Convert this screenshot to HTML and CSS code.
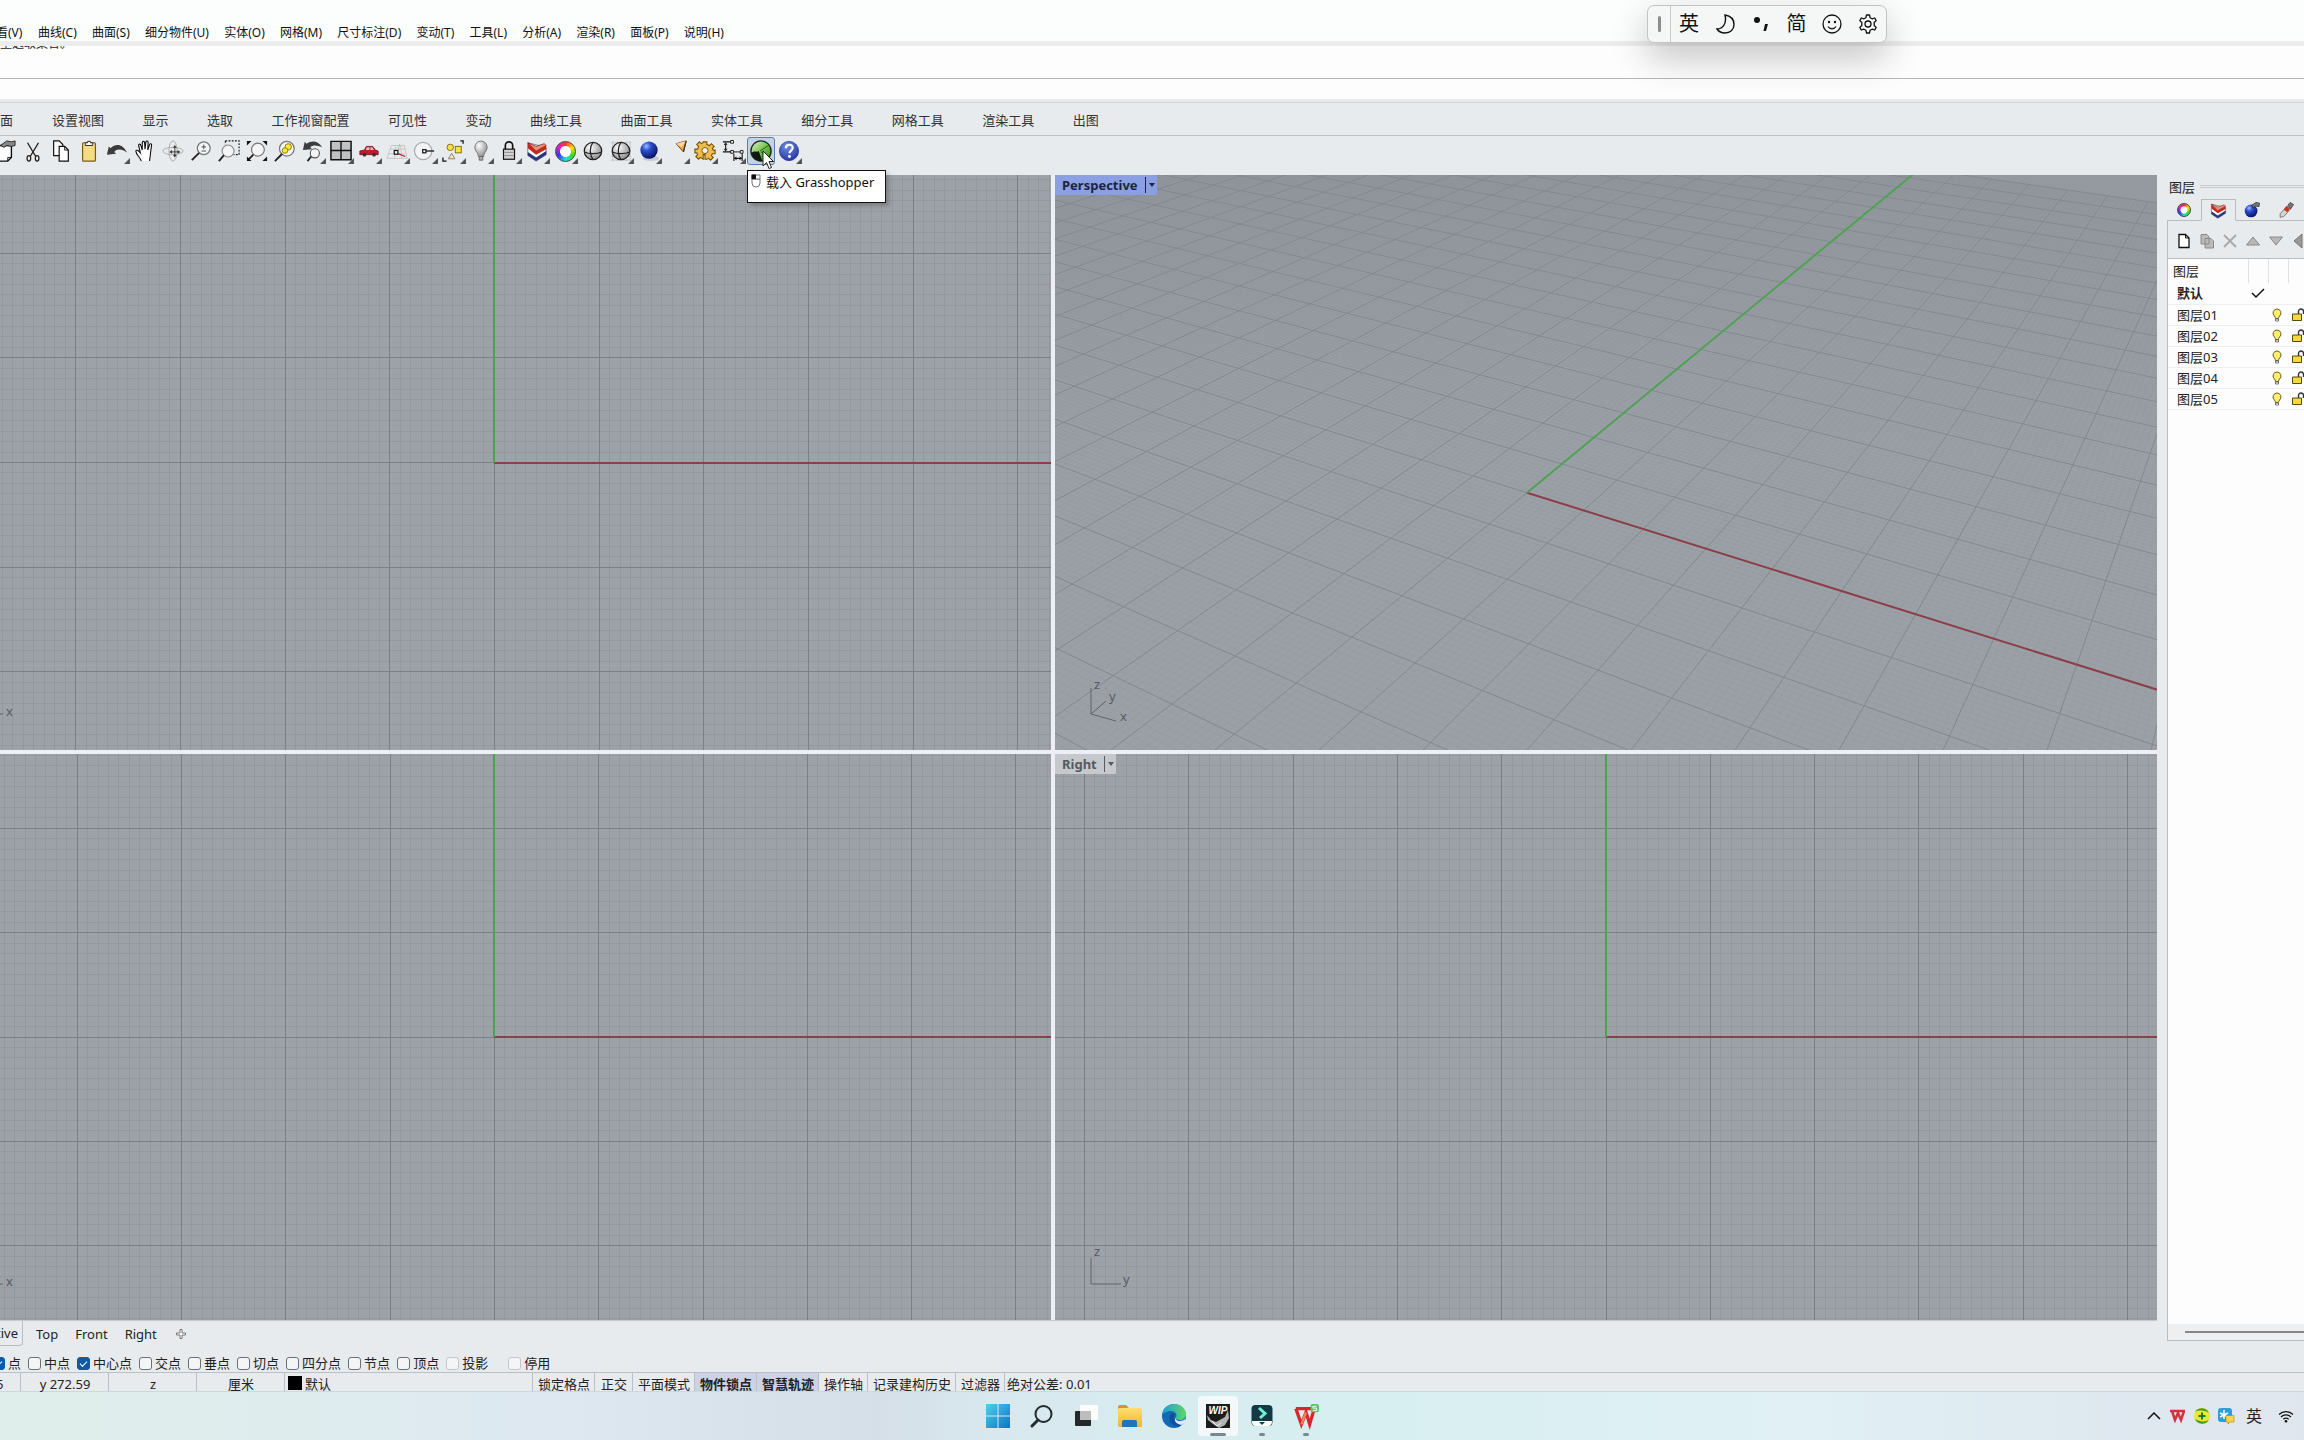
FILE: index.html
```html
<!DOCTYPE html>
<html lang="zh-CN">
<head>
  <meta charset="UTF-8" />
  <meta name="viewport" content="width=device-width, initial-scale=1" />
  <title>Rhino WIP</title>
  <link rel="stylesheet" href="styles.css">
</head>
<body>

  <svg class="defs" aria-hidden="true">
    <defs>
      <radialGradient id="gGrey" cx="35%" cy="30%" r="75%"><stop offset="0" stop-color="#fff"/><stop offset="1" stop-color="#8a8a8a"/></radialGradient>
      <radialGradient id="gBlue" cx="35%" cy="28%" r="75%"><stop offset="0" stop-color="#9db8ff"/><stop offset=".35" stop-color="#2b4fd0"/><stop offset="1" stop-color="#08105e"/></radialGradient>
      <radialGradient id="gHelp" cx="40%" cy="25%" r="80%"><stop offset="0" stop-color="#6f8be8"/><stop offset="1" stop-color="#2336a0"/></radialGradient>
      <linearGradient id="gGreen" x1="0" y1="0" x2="1" y2="1"><stop offset="0" stop-color="#e6f4da"/><stop offset=".5" stop-color="#74c44a"/><stop offset="1" stop-color="#2a8022"/></linearGradient>
      <linearGradient id="gWin" x1="0" y1="0" x2="1" y2="1"><stop offset="0" stop-color="#4fd0ee"/><stop offset="1" stop-color="#0a72c4"/></linearGradient>
      <linearGradient id="gFolder" x1="0" y1="0" x2="0" y2="1"><stop offset="0" stop-color="#ffdf70"/><stop offset="1" stop-color="#efb52f"/></linearGradient>
      <linearGradient id="gEdge" x1="0" y1="0" x2="1" y2="0"><stop offset="0" stop-color="#1b9de0"/><stop offset="1" stop-color="#5fd860"/></linearGradient>
      <symbol id="layers" viewBox="0 0 24 24">
        <path d="M2 3v14l9 6 11-7V8z" fill="#fff" stroke="#555" stroke-width=".8"/>
        <path d="M2 13l9 6 11-7v4l-11 7-9-6z" fill="#27357c"/>
        <path d="M2 3l9 9 11-6v4l-11 6-9-7z" fill="#c8281c"/>
        <path d="M2 3l9 9 11-6-2-2-9 3z" fill="#f0907a" stroke="#7a1c14" stroke-width=".8"/>
      </symbol>
      <symbol id="bulb" viewBox="0 0 12 14">
        <path d="M6 1a4 4 0 0 0-2.600 7c.8.8 1 1.400 1 2.500h3.200c0-1.100.2-1.700 1-2.500A4 4 0 0 0 6 1z" fill="#ffee6a" stroke="#6a6020"/>
        <path d="M4.500 11h3v2h-3z" fill="#fff" stroke="#555" stroke-width=".8"/>
      </symbol>
      <symbol id="unlock" viewBox="0 0 14 14">
        <path d="M7.500 6V3.500a2.500 2.500 0 0 1 5 0V6" fill="none" stroke="#333" stroke-width="1.400"/>
        <path d="M1.500 6h9v6.500h-9z" fill="#f5d93a" stroke="#554a10"/>
      </symbol>
    </defs>
  </svg>

  <nav class="menubar">
    <button class="menu menu-first">看(V)</button>
    <div class="menus">
      <button class="menu">曲线(C)</button>
      <button class="menu">曲面(S)</button>
      <button class="menu">细分物件(U)</button>
      <button class="menu">实体(O)</button>
      <button class="menu">网格(M)</button>
      <button class="menu">尺寸标注(D)</button>
      <button class="menu">变动(T)</button>
      <button class="menu">工具(L)</button>
      <button class="menu">分析(A)</button>
      <button class="menu">渲染(R)</button>
      <button class="menu">面板(P)</button>
      <button class="menu">说明(H)</button>
    </div>
  </nav>

  <section class="command">
    <div class="history"><p>至选取集合。</p></div>
    <input class="prompt" type="text" aria-label="指令">
  </section>

  <nav class="tooltabs">
    <button class="tooltab tooltab-first">面</button>
    <div class="tooltab-list">
      <button class="tooltab">设置视图</button>
      <button class="tooltab">显示</button>
      <button class="tooltab">选取</button>
      <button class="tooltab">工作视窗配置</button>
      <button class="tooltab">可见性</button>
      <button class="tooltab">变动</button>
      <button class="tooltab">曲线工具</button>
      <button class="tooltab">曲面工具</button>
      <button class="tooltab">实体工具</button>
      <button class="tooltab">细分工具</button>
      <button class="tooltab">网格工具</button>
      <button class="tooltab">渲染工具</button>
      <button class="tooltab">出图</button>
    </div>
  </nav>

  <div class="toolbar">
    <button class="tool" aria-label="文件属性"><svg viewBox="0 0 24 24"><path d="M2 6h17v13l-4 4H2z" fill="#fff" stroke="#111" stroke-width="1.500"/><path d="M15 23v-4h4" fill="none" stroke="#111"/><path d="M7 6l7-5 5 1 4-1v5l-4 1-5-1-3 2z" fill="#888" stroke="#222"/></svg></button>
    <button class="tool" aria-label="剪切"><svg viewBox="0 0 24 24"><path d="M6 3l9 15M18 3L9 18" stroke="#222" stroke-width="1.500" fill="none"/><ellipse cx="7.500" cy="20" rx="2" ry="3" fill="none" stroke="#222" stroke-width="1.400"/><ellipse cx="16.500" cy="20" rx="2" ry="3" fill="none" stroke="#222" stroke-width="1.400"/></svg></button>
    <button class="tool" aria-label="复制"><svg viewBox="0 0 24 24"><path d="M4 1h6l4 4v12H4z" fill="#fff" stroke="#111" stroke-width="1.300"/><path d="M10 7h6l4 4v12H10z" fill="#fff" stroke="#111" stroke-width="1.300"/><path d="M16 7v4h4" fill="none" stroke="#111"/></svg></button>
    <button class="tool" aria-label="粘贴"><svg viewBox="0 0 24 24"><rect x="5" y="3" width="14" height="20" rx="1" fill="#f4dc82" stroke="#7a5c14" stroke-width="1.300"/><path d="M8 3h2.500V1.500h3V3H16v3H8z" fill="#fff" stroke="#222"/></svg></button>
    <button class="tool more" aria-label="撤销"><svg viewBox="0 0 24 24"><path d="M1 16l2-9 2 2c6-6 14-4 18 5-5-4-11-5-14-1l2 2z" fill="#3c3c3c"/></svg></button>
    <button class="tool" aria-label="平移"><svg viewBox="0 0 24 24"><path d="M8 23c-1-4-6-7-6-11 1-2 3 0 5 2L5 6c0-2 2-2 2.500 0L9 11V3c0-2 2.600-2 2.600 0L12 10l1-8c.4-1.500 2.400-1 2.400.5L15 11l2-6c.6-1.600 2.500-1 2.200.8L18 14c0 4-1 6-1 9" fill="#fff" stroke="#111" stroke-width="1.200"/></svg></button>
    <button class="tool" aria-label="旋转视图"><svg viewBox="0 0 24 24"><ellipse cx="12" cy="12" rx="11" ry="4" fill="none" stroke="#aaa"/><ellipse cx="12" cy="12" rx="4.500" ry="11" fill="none" stroke="#aaa"/><path d="M14 8v9M10 13h9" stroke="#333"/><path d="M14 5.500l-2 3h4zM14 19l-2-3h4zM8 13l3-2v4zM20 13l-3-2v4z" fill="#333"/></svg></button>
    <button class="tool" aria-label="缩放"><svg viewBox="0 0 24 24"><circle cx="15" cy="9" r="7" fill="#f3f5f6" stroke="#777" stroke-width="1.300"/><path d="M12.500 7.500h5M15 5v5M12.500 12h5" stroke="#444"/><path d="M10 14l-8 8" stroke="#222" stroke-width="2"/></svg></button>
    <button class="tool" aria-label="框选缩放"><svg viewBox="0 0 24 24"><path d="M8 1h15v15h-6M8 1v4" fill="none" stroke="#111" stroke-dasharray="2 1.500" stroke-width="1.200"/><circle cx="11" cy="12" r="6.500" fill="#f3f5f6" stroke="#888" stroke-width="1.200"/><path d="M6.500 16.500L1 23" stroke="#222" stroke-width="2"/></svg></button>
    <button class="tool" aria-label="缩放至最大范围"><svg viewBox="0 0 24 24"><circle cx="13" cy="10.500" r="7" fill="#f3f5f6" stroke="#777" stroke-width="1.300"/><path d="M8 16l-6 6" stroke="#222" stroke-width="2"/><path d="M1 1h5L1 6zM23 1v5l-5-5zM23 23h-5l5-5zM1 23v-5l5 5z" fill="#111"/></svg></button>
    <button class="tool" aria-label="缩放至选取物件"><svg viewBox="0 0 24 24"><circle cx="14" cy="9.500" r="8" fill="#f3f5f6" stroke="#777" stroke-width="1.300"/><circle cx="15.500" cy="7.500" r="3.500" fill="#ffe93c" stroke="#847400"/><circle cx="12" cy="11.500" r="3" fill="#ffe93c" stroke="#847400"/><path d="M9 15l-8 8" stroke="#222" stroke-width="2"/></svg></button>
    <button class="tool more" aria-label="还原视图"><svg viewBox="0 0 24 24"><path d="M1 11l2-9 2 2c6-4 13-3 17 4-5-2-10-3-13 0l2 2z" fill="#3c3c3c"/><circle cx="14" cy="14.500" r="5" fill="#f3f5f6" stroke="#555" stroke-width="1.200"/><path d="M10 18l-4 5" stroke="#222" stroke-width="2"/></svg></button>
    <button class="tool more" aria-label="四个工作视窗"><svg viewBox="0 0 24 24"><path d="M1 1.500h22v20H1z" fill="#bfc1c2" stroke="#111" stroke-width="1.600"/><path d="M12 1.500v20M1 11.500h22" stroke="#111" stroke-width="1.500"/></svg></button>
    <button class="tool more" aria-label="设置视图"><svg viewBox="0 0 24 24"><path d="M2 12l5-1 2-4h7l3 4 3 1v4H2z" fill="#c4182c" stroke="#5a0c14" stroke-width=".8"/><path d="M9.500 8h3v3h-4zM13.500 8h2l2 3h-4z" fill="#e8b8bc"/><circle cx="7" cy="16" r="2" fill="#333"/><circle cx="17.500" cy="16" r="2" fill="#333"/></svg></button>
    <button class="tool more" aria-label="设置工作平面"><svg viewBox="0 0 24 24"><path d="M6 6h14l3 14H1zM4 10h17M3 15h19M11 6l-2 14M16 6l1 14" fill="none" stroke="#c4c4c4"/><path d="M11 14l10 4" stroke="#c41c2c" stroke-width="1.400"/><path d="M13 12l2-8" stroke="#9bc79b"/><rect x="9" y="11.500" width="4" height="4" fill="#fff" stroke="#111" stroke-width="1.300"/></svg></button>
    <button class="tool more" aria-label="物件锁点"><svg viewBox="0 0 24 24"><circle cx="10" cy="12" r="9.500" fill="#f1f3f4" stroke="#aaa" stroke-width="1.300"/><path d="M13 12h9" stroke="#111" stroke-width="1.400"/><rect x="9.500" y="10.500" width="3.500" height="3.500" fill="#fff" stroke="#111" stroke-width="1.300"/></svg></button>
    <button class="tool more" aria-label="选取"><svg viewBox="0 0 24 24"><circle cx="9" cy="8" r="3.500" fill="#ffe23c" stroke="#7a6a10"/><rect x="14.500" y="7" width="6.500" height="7" fill="#ffe23c" stroke="#7a6a10"/><path d="M10.500 14.500l3.500 6H7z" fill="#f2e6d0" stroke="#8a7a5a"/><path d="M20 1h3v3M1 19v4h4" fill="none" stroke="#111" stroke-width="1.400"/></svg></button>
    <button class="tool more" aria-label="隐藏物件"><svg viewBox="0 0 24 24"><path d="M12 1a7 7 0 0 0-5.500 11c2 3 2.500 4 2.500 6h6c0-2 .5-3 2.500-6A7 7 0 0 0 12 1z" fill="url(#gGrey)" stroke="#777"/><path d="M10 18h4v4h-4z" fill="#aaa" stroke="#666"/></svg></button>
    <button class="tool more" aria-label="锁定物件"><svg viewBox="0 0 24 24"><path d="M8 10V6a4 4 0 0 1 8 0v4" fill="none" stroke="#111" stroke-width="1.800"/><rect x="6" y="10" width="12" height="11" fill="#d4d4d4" stroke="#111" stroke-width="1.300"/><path d="M7 13.500h10M7 17h10" stroke="#888"/></svg></button>
    <button class="tool more" aria-label="图层"><svg viewBox="0 0 24 24"><use href="#layers"/></svg></button>
    <button class="tool more" aria-label="物件属性"><span class="wheel"></span></button>
    <button class="tool" aria-label="着色"><svg viewBox="0 0 24 24"><circle cx="12" cy="12" r="9.500" fill="url(#gGrey)" stroke="#222" stroke-width="1.400"/><path d="M12 2.500c-4 5-4 13 0 19M2.500 13c5 2.500 14 2.500 19 0" fill="none" stroke="#222" stroke-width="1.300"/></svg></button>
    <button class="tool more" aria-label="着色模式"><svg viewBox="0 0 24 24"><path d="M3 1v22M8 1v22M13 1v22M18 1v22M22 1v22M1 3h22M1 8h22M1 13h22M1 18h22M1 22h22" stroke="#bbb" stroke-width=".8"/><circle cx="12" cy="12" r="9.500" fill="url(#gGrey)" stroke="#222" stroke-width="1.400"/><path d="M12 2.500c-4 5-4 13 0 19M2.500 13c5 2.500 14 2.500 19 0" fill="none" stroke="#222" stroke-width="1.300"/></svg></button>
    <button class="tool more" aria-label="渲染"><svg viewBox="0 0 24 24"><ellipse cx="14" cy="20" rx="9" ry="3" fill="#c6c9ce"/><circle cx="12" cy="11" r="9.500" fill="url(#gBlue)"/></svg></button>
    <button class="tool more" aria-label="聚光灯"><svg viewBox="0 0 24 24"><path d="M11 4l11-3-3 12z" fill="#f4a63a" stroke="#7a3c10"/><path d="M11 4l6 4 5-7z" fill="#ffd99a"/><path d="M22 1l-3 12" stroke="#3a3a3a" stroke-width="1.400"/></svg></button>
    <button class="tool more" aria-label="选项"><svg viewBox="0 0 24 24"><path d="M10 2h4v3l3 1 2-2 3 3-2 2 1 2h2v4h-3l-1 2 2 2-3 3-2-2-2 1h-2v-5h-2v5l-3-2-2 2-3-3 2-2-1-2H1v-4h3l1-3-2-2 3-3 2 2 2-1z" fill="#f0bc48" stroke="#7a5208" stroke-width="1.200"/><circle cx="12" cy="11.500" r="3.300" fill="#eef0f2" stroke="#7a5208"/></svg></button>
    <button class="tool more" aria-label="尺寸标注"><svg viewBox="0 0 24 24"><path d="M1 2h9M1 13h9M4 4v7M13 15v8M22 15v8M14 20h7" stroke="#111" stroke-width="1.200" fill="none"/><path d="M2.500 5.500L4 3l1.500 2.500M2.500 9.500L4 12l1.500-2.500M16 18.500L13.500 20l2.500 1.500M19 18.500l2.500 1.500-2.500 1.500" fill="none" stroke="#111"/><path d="M9.500.5h3v3h-3zM9.500 11.500h3v3h-3zM20 11.500h3v3h-3z" fill="#fff" stroke="#111"/><path d="M12 13h8" stroke="#111"/></svg></button>
    <div class="tool-wrap">
      <button class="tool hot" aria-label="载入 Grasshopper" aria-describedby="tip"><svg viewBox="0 0 24 24"><circle cx="12" cy="12" r="11" fill="url(#gGreen)" stroke="#1c2a18" stroke-width="1.500"/><path d="M1.500 14c4-3 6 0 8-2l4 11c-6 1-11-3-12-9z" fill="#10180e"/><path d="M11 12l9-6M12 13l7 4" stroke="#1c5a18"/></svg></button>
      <svg class="cursor" viewBox="0 0 12 20"><path d="M1 1v15l3.500-3.500L7 18.500l2.500-1-2.500-6h4.500z" fill="#fff" stroke="#222"/></svg>
      <div class="tip" id="tip" role="tooltip"><svg viewBox="0 0 10 14"><path d="M1 5h8v4a4 4 0 0 1-8 0z" fill="#fff" stroke="#777"/><path d="M1 1h8v4H1z" fill="#fff" stroke="#777"/><path d="M.5.500H5V5H.5z" fill="#111"/></svg>载入 Grasshopper</div>
    </div>
    <button class="tool more" aria-label="说明"><svg viewBox="0 0 24 24"><circle cx="12" cy="12" r="10.500" fill="url(#gHelp)" stroke="#26348a" stroke-width=".8"/><path d="M8.500 9c0-5 7.500-5 7.500-.5 0 3-3.500 3-3.500 6" fill="none" stroke="#fff" stroke-width="2.400"/><circle cx="12.500" cy="18" r="1.600" fill="#fff"/></svg></button>
  </div>

  <main class="workspace">
    <div class="stage">
      <div class="views">
        <section class="viewport" data-kind="plan" data-origin="right" data-step="104.7">
          <svg class="gizmo gizmo-cut" viewBox="0 0 20 60"><path d="M0 24h3"/><text x="6" y="26">x</text></svg>
        </section>
        <section class="viewport persp" data-kind="persp">
          <div class="view-title view-title-active"><button class="view-name">Perspective</button><button class="view-drop" aria-label="Perspective 菜单"></button></div>
          <svg class="gizmo" viewBox="0 0 60 60"><path d="M11 24V-2M11 24l15-13M11 24l25 7"/><text x="14" y="-1">z</text><text x="29" y="11">y</text><text x="40" y="31">x</text></svg>
        </section>
        <section class="viewport" data-kind="plan" data-origin="right" data-step="104.3">
          <svg class="gizmo gizmo-cut" viewBox="0 0 20 60"><path d="M0 24h3"/><text x="6" y="26">x</text></svg>
        </section>
        <section class="viewport" data-kind="plan" data-origin="center" data-step="104.3">
          <div class="view-title"><button class="view-name">Right</button><button class="view-drop" aria-label="Right 菜单"></button></div>
          <svg class="gizmo" viewBox="0 0 60 60"><path d="M11-2v26h30"/><text x="14" y="-4">z</text><text x="43" y="24">y</text></svg>
        </section>
      </div>
      <nav class="viewtabs">
        <button class="viewtab viewtab-on">tive</button>
        <button class="viewtab">Top</button>
        <button class="viewtab">Front</button>
        <button class="viewtab">Right</button>
        <button class="viewtab viewtab-add" aria-label="新增"><svg viewBox="0 0 10 10"><path d="M4 .5h2V4h3.500v2H6v3.500H4V6H.5V4H4z" fill="#fff" stroke="#777"/></svg></button>
      </nav>
    </div>

    <aside class="panel">
      <div class="panel-title"><h2>图层</h2><span class="grip"></span></div>
      <div class="panel-tabs">
        <button class="ptab" aria-label="属性"><span class="wheel wheel-sm"></span></button>
        <button class="ptab ptab-on" aria-label="图层"><svg viewBox="0 0 24 24"><use href="#layers"/></svg></button>
        <button class="ptab" aria-label="材质"><svg viewBox="0 0 24 24"><circle cx="10" cy="14" r="9" fill="url(#gBlue)"/><path d="M11 6l6-4 5 1-1 5-5-1-3 3z" fill="#777" stroke="#222"/></svg></button>
        <button class="ptab" aria-label="显示"><svg viewBox="0 0 24 24"><path d="M3 18l10-11 5 4L8 22l-5 1z" fill="#d8d4d0" stroke="#555"/><path d="M8 12l4-5 5 4-4 5z" fill="#c83420"/><path d="M14 6l3-4 5 3-4 6z" fill="#777" stroke="#333"/></svg></button>
      </div>
      <div class="panel-body">
        <div class="panel-tools">
          <button class="ptool" aria-label="新建图层"><svg viewBox="0 0 16 16"><path d="M3 1.500h6.500L13 5v9.500H3z" fill="#fff" stroke="#111" stroke-width="1.300"/><path d="M9.500 1.500V5H13" fill="none" stroke="#111"/></svg></button>
          <button class="ptool" aria-label="新建子图层"><svg viewBox="0 0 16 16"><path d="M2 1.500h6L10 4v7H2zM6 5.500h6l2.500 2.500v7H6z" fill="#bbb" stroke="#8a8a8a"/></svg></button>
          <button class="ptool" aria-label="删除"><svg viewBox="0 0 16 16"><path d="M2 2l12 12M14 2L2 14" stroke="#aaa" stroke-width="2"/></svg></button>
          <button class="ptool" aria-label="上移"><svg viewBox="0 0 16 16"><path d="M8 4l6.500 8h-13z" fill="#b8b8b8" stroke="#8a8a8a"/></svg></button>
          <button class="ptool" aria-label="下移"><svg viewBox="0 0 16 16"><path d="M8 12l6.500-8h-13z" fill="#b8b8b8" stroke="#8a8a8a"/></svg></button>
          <button class="ptool" aria-label="移至上层"><svg viewBox="0 0 16 16"><path d="M3 8l8-7v14z" fill="#999" stroke="#777"/></svg></button>
        </div>
        <div class="layer-area">
          <table class="layers">
            <thead><tr><th>图层</th><th></th><th></th><th></th></tr></thead>
            <tbody>
              <tr class="current"><td>默认</td><td><svg class="check" viewBox="0 0 14 12"><path d="M1 6l4 4 8-8" fill="none" stroke="#111" stroke-width="1.500"/></svg></td><td></td><td></td></tr>
              <tr><td>图层01</td><td></td><td><svg class="bulb"><use href="#bulb"/></svg></td><td><svg class="lock"><use href="#unlock"/></svg></td></tr>
              <tr><td>图层02</td><td></td><td><svg class="bulb"><use href="#bulb"/></svg></td><td><svg class="lock"><use href="#unlock"/></svg></td></tr>
              <tr><td>图层03</td><td></td><td><svg class="bulb"><use href="#bulb"/></svg></td><td><svg class="lock"><use href="#unlock"/></svg></td></tr>
              <tr><td>图层04</td><td></td><td><svg class="bulb"><use href="#bulb"/></svg></td><td><svg class="lock"><use href="#unlock"/></svg></td></tr>
              <tr><td>图层05</td><td></td><td><svg class="bulb"><use href="#bulb"/></svg></td><td><svg class="lock"><use href="#unlock"/></svg></td></tr>
            </tbody>
          </table>
        </div>
        <div class="hscroll"><span></span></div>
      </div>
    </aside>
  </main>

  <form class="osnap">
    <label><input type="checkbox" checked>点</label>
    <label><input type="checkbox">中点</label>
    <label><input type="checkbox" checked>中心点</label>
    <label><input type="checkbox">交点</label>
    <label><input type="checkbox">垂点</label>
    <label><input type="checkbox">切点</label>
    <label><input type="checkbox">四分点</label>
    <label><input type="checkbox">节点</label>
    <label><input type="checkbox">顶点</label>
    <label class="soft"><input type="checkbox">投影</label>
    <label class="soft"><input type="checkbox">停用</label>
  </form>

  <footer class="status">
    <span class="cell cell-x">5</span>
    <span class="cell cell-fix">y 272.59</span>
    <span class="cell cell-fix">z</span>
    <span class="cell cell-fix">厘米</span>
    <button class="cell cell-layer"><i></i>默认</button>
    <button class="cell">锁定格点</button>
    <button class="cell">正交</button>
    <button class="cell">平面模式</button>
    <button class="cell cell-on">物件锁点</button>
    <button class="cell cell-on">智慧轨迹</button>
    <button class="cell">操作轴</button>
    <button class="cell">记录建构历史</button>
    <button class="cell">过滤器</button>
    <span class="cell cell-last">绝对公差: 0.01</span>
  </footer>

  <div class="taskbar">
    <div class="apps">
      <button class="app" aria-label="开始"><svg viewBox="0 0 24 24"><path d="M0 0h11.500v11.500H0zM12.500 0H24v11.500H12.500zM0 12.500h11.500V24H0zM12.500 12.500H24V24H12.500z" fill="url(#gWin)"/></svg></button>
      <button class="app" aria-label="搜索"><svg viewBox="0 0 24 24"><circle cx="13.500" cy="10" r="8" fill="none" stroke="#222a30" stroke-width="2"/><path d="M8 16l-6 6" stroke="#222a30" stroke-width="3" stroke-linecap="round"/></svg></button>
      <button class="app" aria-label="任务视图"><svg viewBox="0 0 24 24"><rect x="6" y="1" width="18" height="15" rx="1" fill="#fbfcfc"/><rect x="1" y="7" width="16" height="15" rx="1" fill="#25282a"/><path d="M6 7h11v9H6z" fill="#bdbdbd"/></svg></button>
      <button class="app" aria-label="文件资源管理器"><svg viewBox="0 0 24 24"><path d="M0 3a2 2 0 0 1 2-2h6l3 3v4H0z" fill="#d9961e"/><rect y="4" width="24" height="19" rx="1.500" fill="url(#gFolder)"/><path d="M4 23v-5a2 2 0 0 1 2-2h11a2 2 0 0 1 2 2v5z" fill="#1b78b8"/></svg></button>
      <button class="app" aria-label="Edge"><svg viewBox="0 0 24 24"><circle cx="12" cy="12" r="12" fill="#1468b8"/><path d="M0 11C1 4 6 0 12 0c7 0 12 5 12 10 0 4-3 6-6 6-3 0-5-1-4-3 1-1 1-5-4-6-5 0-9 2-10 4z" fill="url(#gEdge)"/><path d="M9 10c-3 4-1 10 4 12 4 1 8-1 10-4-3 1-8 1-10-2-2-2-1-4 0-5-1-2-3-2-4-1z" fill="#0f4f9c"/><path d="M14 12c-2 3 1 5 4 5 2 0 4-1 5-2l1 3-4 3c-6-1-9-4-6-9z" fill="#d9edf1"/></svg></button>
      <button class="app app-active" aria-label="Rhino WIP"><svg viewBox="0 0 24 24"><path d="M0 0h24v24H0z" fill="#1c1c1c"/><path d="M1 11l4 5 5 2 9-5 3-7 1 8-4 7-6 3-6-4-5-4z" fill="#b4b4b4"/><path d="M6 17l5 5 4-3" stroke="#eee" fill="none"/><text x="12" y="10" class="wip">WIP</text></svg></button>
      <button class="app app-open" aria-label="Filmora"><svg viewBox="0 0 24 24"><rect x="1.500" y="1" width="21" height="21" rx="4" fill="#123a44"/><path d="M2 17h20v1a4 4 0 0 1-4 4H6a4 4 0 0 1-4-4z" fill="#fff"/><path d="M9 4l6 5.500L10 14" fill="none" stroke="#6ff0d0" stroke-width="3"/><path d="M9 18l3 3 3-3z" fill="#123a44"/></svg></button>
      <button class="app app-open" aria-label="WPS"><svg viewBox="0 0 26 24"><path d="M2 4h18M2 4l6 17 5-13 4 13 5-17" fill="none" stroke="#d8262c" stroke-width="3.500"/><path d="M8 21l5-13" stroke="#f08a50" stroke-width="2.500"/><rect x="18" y="-1" width="9" height="9" rx="2" fill="#5cc46c"/><path d="M24.500 1.500h-4v2h4v2.500h-4" fill="none" stroke="#fff"/></svg></button>
    </div>
    <div class="tray">
      <button class="tray-btn" aria-label="显示隐藏的图标"><svg viewBox="0 0 16 16"><path d="M2 11l6-6 6 6" fill="none" stroke="#111" stroke-width="1.500"/></svg></button>
      <button class="tray-btn" aria-label="WPS"><svg viewBox="0 0 16 16"><path d="M0 3h15M2 3l3 9 3-7 3 7 3-9" fill="none" stroke="#d8303c" stroke-width="2.500"/></svg></button>
      <button class="tray-btn" aria-label="安全卫士"><svg viewBox="0 0 16 16"><circle cx="8" cy="8" r="8" fill="#ece636"/><path d="M1 4a8 8 0 0 1 14 1C10 2 5 2 1 4zM15 12a8 8 0 0 1-14-1c5 3 10 3 14 1z" fill="#3fa030"/><path d="M8 4.500v7M4.500 8h7" stroke="#1c7a20" stroke-width="2"/></svg></button>
      <button class="tray-btn" aria-label="消息"><svg viewBox="0 0 16 16"><rect width="14" height="14" rx="3" fill="#28a0e0"/><path d="M6 2v9M2 5l8 4M10 5L2 9" stroke="#fff" stroke-width="1.500"/><path d="M8 7.500h8V14h-4l-2 2v-2H8z" fill="#f8d84a" stroke="#a8801a" stroke-width=".6"/></svg></button>
      <button class="tray-btn tray-ime">英</button>
      <button class="tray-btn tray-wifi" aria-label="网络"><svg viewBox="0 0 16 16"><path d="M1 6.500a10 10 0 0 1 14 0M3 9a7 7 0 0 1 10 0M5.300 11.300a4 4 0 0 1 5.400 0" fill="none" stroke="#111" stroke-width="1.200"/><circle cx="8" cy="13.300" r="1.300" fill="#111"/></svg></button>
    </div>
  </div>

  <div class="ime">
    <span class="ime-grip"></span>
    <button class="ime-btn">英</button>
    <button class="ime-btn" aria-label="半角"><svg viewBox="0 0 20 20"><path d="M10 1c6 1 9 5 9 9.500C19 16 15 19 10 19c-4 0-6-1-8-4 6 0 10-6 8-14z" fill="none" stroke="#111" stroke-width="1.400"/></svg></button>
    <button class="ime-btn" aria-label="中文标点"><svg viewBox="0 0 20 20"><circle cx="6" cy="6" r="3" fill="#111"/><path d="M14 10h3l-2 7h-2.500z" fill="#111"/></svg></button>
    <button class="ime-btn">简</button>
    <button class="ime-btn" aria-label="表情"><svg viewBox="0 0 20 20"><circle cx="10" cy="10" r="9" fill="none" stroke="#111" stroke-width="1.300"/><circle cx="7" cy="8" r="1.200" fill="#111"/><circle cx="13" cy="8" r="1.200" fill="#111"/><path d="M6 12.500c2 3 6 3 8 0" fill="none" stroke="#111" stroke-width="1.300"/></svg></button>
    <button class="ime-btn" aria-label="设置"><svg viewBox="0 0 20 20"><path d="M8.500 1h3l.6 2.700 2 1.100 2.600-.8 1.500 2.600-2 1.900v3l2 1.900-1.500 2.600-2.600-.8-2 1.100-.6 2.700h-3l-.6-2.700-2-1.100-2.600.8L1.800 13.400l2-1.900v-3l-2-1.900L3.300 4l2.600.8 2-1.100z" fill="none" stroke="#111" stroke-width="1.300" stroke-linejoin="round"/><circle cx="10" cy="10" r="3" fill="none" stroke="#111" stroke-width="1.300"/></svg></button>
  </div>

  <script src="grid.js"></script>
</body>
</html>
```

FILE: styles.css
```css
* {
  box-sizing: border-box;
}

body {
  margin: 0;
  height: 100vh;
  display: flex;
  flex-direction: column;
  overflow: hidden;
  background: #e8ebee;
  color: #222;
  font-family: "Noto Sans", "Noto Sans CJK SC", sans-serif;
  font-size: 13px;
  line-height: 18px;
}

button {
  margin: 0;
  padding: 0;
  border: 0;
  background: none;
  color: inherit;
  font: inherit;
  white-space: nowrap;
}

svg {
  display: block;
  overflow: visible;
}

.defs {
  position: absolute;
  width: 0;
  height: 0;
}

/* menu */
.menubar {
  display: flex;
  align-items: flex-end;
  height: 41px;
  background: #fcfdfd;
  font-size: 12px;
  line-height: 16px;
  color: #111;
  flex: none;
}

.menu-first {
  width: 38px;
  margin-left: -4px;
  text-align: left;
}

.menus {
  display: flex;
  justify-content: space-between;
  width: 690px;
  padding-left: 4px;
}

/* command area */
.command {
  flex: none;
  border-top: 5px solid #ececed;
  background: #fdfdfd;
}

.history {
  height: 33px;
  overflow: hidden;
  border-bottom: 1px solid #b4b6b8;
  font-size: 12px;
  line-height: 14px;
}

.history p {
  margin: -9px 0 0;
}

.prompt {
  display: block;
  width: 100%;
  height: 20px;
  border: 0;
  outline: 0;
  background: #fdfdfd;
}

/* toolbar tabs */
.tooltabs {
  flex: none;
  display: flex;
  align-items: center;
  height: 33px;
  margin-top: 3px;
  padding-top: 2px;
  border-top: 1px solid #cfd4d8;
  color: #333;
}

.tooltab-first {
  width: 52px;
  text-align: left;
}

.tooltab-list {
  display: flex;
  justify-content: space-between;
  width: 1047px;
}

/* toolbar */
.toolbar {
  flex: none;
  display: flex;
  height: 40px;
  margin-left: -9px;
  padding-top: 1px;
  border-top: 1px solid #bfc3c7;
}

.tool {
  position: relative;
  display: flex;
  align-items: center;
  justify-content: center;
  width: 28px;
  height: 28px;
}

.tool svg {
  width: 22px;
  height: 22px;
}

.more::after {
  content: "";
  position: absolute;
  right: 1px;
  bottom: 1px;
  border: 3px solid #555;
  border-top-color: transparent;
  border-left-color: transparent;
}

.tool-wrap {
  position: relative;
}

.hot {
  border: 1px solid #5a7fae;
  border-radius: 3px;
  background: #c3d3e2;
}

.tool-wrap .cursor {
  position: absolute;
  left: 15px;
  top: 13px;
  width: 12px;
  height: 20px;
  z-index: 3;
}

.tip {
  position: absolute;
  z-index: 2;
  left: 0;
  top: 33px;
  display: flex;
  width: 139px;
  height: 33px;
  padding: 2px 0 0 3px;
  gap: 5px;
  border: 1px solid #111;
  background: #fff;
  color: #111;
  white-space: nowrap;
  box-shadow: 3px 3px 4px rgba(0, 0, 0, 0.2);
}

.tip svg {
  width: 10px;
  height: 14px;
  margin-top: 1px;
}

.wheel {
  width: 21px;
  height: 21px;
  border-radius: 50%;
  border: 1px solid #444;
  background: radial-gradient(circle, #fff 0 5px, transparent 6px), conic-gradient(#f33, #fd0, #3d2, #2dd, #33f, #d2c, #f33);
}

.wheel-sm {
  width: 14px;
  height: 14px;
  background: radial-gradient(circle, #fff 0 3px, transparent 4px), conic-gradient(#f33, #fd0, #3d2, #2dd, #33f, #d2c, #f33);
}

/* viewports */
.workspace {
  flex: 1;
  display: flex;
  min-height: 0;
}

.stage {
  flex: 1;
  display: flex;
  flex-direction: column;
  min-width: 0;
}

.views {
  flex: 1;
  display: grid;
  grid-template-columns: 1051fr 1102fr;
  grid-template-rows: 575fr 566fr;
  gap: 4px;
  min-height: 0;
  background: #eceff6;
  border-bottom: 1px solid #c6c9cf;
}

.viewport {
  position: relative;
  overflow: hidden;
  background: #9da2a8;
}

.persp {
  background: linear-gradient(#94999f, #9ba0a7 50%);
}

.grid {
  position: absolute;
  inset: 0;
  width: 100%;
  height: 100%;
}

.grid path {
  fill: none;
}

.grid .minor {
  stroke: #7d838b;
  stroke-opacity: 0.28;
}

.grid .major {
  stroke: #7b8088;
}

.persp .minor {
  stroke-opacity: 0.12;
}

.persp .major {
  stroke: #83888f;
}

.grid .axis-x {
  stroke: #8c3f49;
  stroke-width: 2;
}

.grid .axis-y {
  stroke: #4fa253;
  stroke-width: 2;
}

.view-title {
  position: absolute;
  z-index: 1;
  left: 0;
  top: 0;
  display: flex;
  align-items: center;
  height: 20px;
  background: #c5c9cc;
  color: #555a60;
}

.view-title-active {
  background: #8b9fe3;
  color: #1d2440;
}

.view-name {
  padding: 0 7px;
  font-weight: 700;
}

.view-drop {
  width: 12px;
  height: 16px;
  padding-left: 3px;
  border-left: 1px solid currentColor;
}

.view-drop::after {
  content: "";
  display: block;
  width: 0;
  border: 3px solid transparent;
  border-top: 4px solid currentColor;
  border-bottom: 0;
}

.gizmo {
  position: absolute;
  left: 25px;
  bottom: 0;
  width: 60px;
  height: 60px;
}

.gizmo-cut {
  left: 0;
  width: 20px;
}

.gizmo path {
  fill: none;
  stroke: #5f646a;
}

.gizmo text {
  fill: #565b61;
  font-size: 13px;
}

/* viewport tabs */
.viewtabs {
  flex: none;
  display: flex;
  height: 31px;
  gap: 17px;
}

.viewtab {
  height: 26px;
}

.viewtab-on {
  margin: 0 -4px 0 -4px;
  height: 25px;
  padding-right: 4px;
  border-right: 1px solid #b9bdc2;
  border-bottom: 1px solid #b9bdc2;
  border-radius: 0 0 4px 0;
}

.viewtab-add svg {
  width: 10px;
  height: 10px;
  margin-left: 2px;
}

/* layer panel */
.panel {
  width: 147px;
  display: flex;
  flex-direction: column;
  padding: 1px 0 11px 10px;
}

.panel-title {
  display: flex;
  align-items: center;
  gap: 5px;
  height: 21px;
  margin-bottom: 2px;
  padding-left: 2px;
}

.panel-title h2 {
  margin: 0;
  font-size: 13px;
  font-weight: 400;
}

.grip {
  flex: 1;
  height: 3px;
  border: 1px solid #c6cacd;
  border-width: 1px 0;
}

.panel-tabs {
  display: flex;
  height: 22px;
}

.ptab {
  flex: 1 0 33px;
  display: flex;
  align-items: center;
  justify-content: center;
  height: 22px;
  border-bottom: 1px solid #b9bdc2;
}

.ptab svg {
  width: 17px;
  height: 17px;
}

.ptab-on {
  border: 1px solid #b9bdc2;
  border-bottom-color: #e8ebee;
}

.panel-body {
  flex: 1;
  display: flex;
  flex-direction: column;
  border: 1px solid #b9bdc2;
  border-width: 0 0 1px 1px;
  overflow: hidden;
}

.panel-tools {
  display: flex;
  align-items: center;
  height: 38px;
  padding: 2px 0 0 8px;
  gap: 7px;
  border-bottom: 1px solid #b9bdc2;
}

.ptool,
.ptool svg {
  flex: none;
  width: 16px;
  height: 16px;
}

.layer-area {
  flex: 1;
  background: #fdfdfd;
}

.layers {
  width: 100%;
  table-layout: fixed;
  border-collapse: collapse;
}

.layers th {
  width: 20px;
  height: 24px;
  padding: 0 0 0 5px;
  border-right: 1px solid #dfe2e5;
  font-weight: 400;
  text-align: left;
}

.layers th:first-child {
  width: 80px;
}

.layers th:last-child {
  width: auto;
  border: 0;
}

.layers td {
  height: 21px;
  padding: 0;
  border-bottom: 1px solid #eceef0;
}

.layers td:first-child {
  padding-left: 9px;
}

.current {
  font-weight: 700;
}

.check {
  width: 14px;
  height: 12px;
  margin-left: 3px;
}

.bulb {
  width: 12px;
  height: 14px;
  margin-left: 3px;
}

.lock {
  width: 14px;
  height: 14px;
  margin-left: 3px;
}

.hscroll {
  height: 16px;
  padding: 7px 0 0 17px;
  background: #eeeff0;
}

.hscroll span {
  display: block;
  height: 2px;
  background: #868686;
}

/* object snaps */
.osnap {
  flex: none;
  display: flex;
  gap: 7px;
  height: 20px;
  margin: 0 0 0 -8px;
  padding-top: 2px;
}

.osnap label {
  display: flex;
  align-items: center;
  gap: 3px;
  white-space: nowrap;
}

.osnap input {
  appearance: none;
  width: 13px;
  height: 13px;
  margin: 0;
  border: 1px solid #6c7075;
  border-radius: 3px;
  background: #f4f5f6;
}

.osnap input:checked {
  border-color: #0a5ca8;
  background: #0a5ca8;
}

.osnap input:checked::after {
  content: "";
  display: block;
  width: 6px;
  height: 3px;
  margin: 3px 0 0 2px;
  border: 1px solid #fff;
  border-width: 0 0 1px 1px;
  transform: rotate(-45deg);
}

.osnap .soft input {
  border-color: #c4c7ca;
}

.osnap .soft + .soft {
  margin-left: 13px;
}

/* status bar */
.status {
  flex: none;
  display: flex;
  height: 20px;
  border-top: 1px solid #b9c0c8;
  border-bottom: 1px solid #cdd8dc;
}

.cell {
  display: flex;
  align-items: center;
  justify-content: center;
  min-width: 38px;
  padding: 3px 4px 0 5px;
  border-right: 1px solid #b9c0c8;
  white-space: nowrap;
}

.cell-x {
  min-width: 0;
  width: 21px;
  justify-content: flex-start;
  padding-left: 0;
  text-indent: -4px;
}

.cell-fix {
  width: 88px;
}

.cell-layer {
  width: 248px;
  justify-content: flex-start;
  gap: 3px;
  padding-left: 3px;
}

.cell-layer i {
  width: 14px;
  height: 14px;
  margin-top: -2px;
  background: #000;
}

.cell-on {
  background: #ccd3e6;
  font-weight: 700;
}

.cell-last {
  border: 0;
  padding-left: 2px;
}

/* taskbar */
.taskbar {
  flex: none;
  display: grid;
  grid-template-columns: 1fr auto 1fr;
  align-items: center;
  height: 48px;
  background: linear-gradient(90deg, #dfeeea 0, #dfecef 15%, #dde8f1 24%, #d5dfe8 38%, #d8e8ee 43%, #d7eff1 58%, #e0f0f5 78%, #dfe7ef 94%, #e0e6ee 100%);
}

.apps {
  grid-column: 2;
  display: flex;
  height: 40px;
}

.app {
  position: relative;
  display: flex;
  align-items: center;
  justify-content: center;
  width: 44px;
}

.app svg {
  width: 24px;
  height: 24px;
}

.app-active {
  width: 40px;
  margin: 0 2px;
  border-radius: 4px;
  background: #f3f9fb;
}

.app-active::after,
.app-open::after {
  content: "";
  position: absolute;
  bottom: 0;
  width: 6px;
  height: 3px;
  border-radius: 2px;
  background: #7c868c;
}

.app-active::after {
  width: 16px;
}

.wip {
  fill: #fff;
  font: italic 700 10px "Liberation Sans", sans-serif;
  text-anchor: middle;
}

.tray {
  display: flex;
  align-items: center;
  justify-content: flex-end;
  gap: 8px;
  padding-right: 10px;
}

.tray-btn,
.tray-btn svg {
  width: 16px;
  height: 16px;
}

.tray-ime {
  margin-left: 4px;
  font-size: 16px;
  line-height: 16px;
}

.tray-wifi {
  margin-left: 8px;
}

/* floating input-method bar */
.ime {
  position: absolute;
  left: 1647px;
  top: 5px;
  display: flex;
  align-items: center;
  width: 240px;
  height: 38px;
  border: 1px solid #c2c3c5;
  border-radius: 7px;
  background: #f5f6f6;
  box-shadow: 0 14px 36px rgba(0, 0, 0, 0.24);
  color: #111;
}

.ime-grip {
  width: 23px;
  height: 100%;
  padding: 10px 0 10px 10px;
  border-right: 1px solid #c9cacc;
}

.ime-grip::before {
  content: "";
  display: block;
  width: 3px;
  height: 16px;
  border-radius: 2px;
  background: #8d8d8d;
}

.ime-btn {
  display: flex;
  align-items: center;
  justify-content: center;
  width: 36px;
  height: 36px;
  font-size: 20px;
}

.ime-btn svg {
  width: 20px;
  height: 20px;
}
```

FILE: grid.js
```js
const NS = 'http://www.w3.org/2000/svg';
const EXTENT = 20;

// camera on the ground plane, offsets in pixels from the viewport centre
const cam = { ox: -79, oy: 30.2, ax: 55.24, ay: 17.27, bx: 36.34, by: -29.97, wx: -0.02452, wy: 0.04254 };

function addPath(svg, cls, d) {
  const p = document.createElementNS(NS, 'path');
  p.setAttribute('class', cls);
  p.setAttribute('d', d);
  svg.appendChild(p);
}

function drawPlan(svg, w, h, view) {
  const step = Number(view.dataset.step);
  const ox = view.dataset.origin === 'center' ? w / 2 : w - 556.6;
  const oy = h / 2;
  const cell = step / 10;
  let minor = '';
  let major = '';

  for (let i = Math.ceil(-ox / cell); ox + i * cell < w; i++) {
    const x = Math.floor(ox + i * cell) + 0.5;
    if (i % 10 === 0) major += `M${x} 0V${h}`;
    else minor += `M${x} 0V${h}`;
  }
  for (let i = Math.ceil(-oy / cell); oy + i * cell < h; i++) {
    const y = Math.floor(oy + i * cell) + 0.5;
    if (i % 10 === 0) major += `M0 ${y}H${w}`;
    else minor += `M0 ${y}H${w}`;
  }

  addPath(svg, 'minor', minor);
  addPath(svg, 'major', major);
  addPath(svg, 'axis-x', `M${Math.floor(ox)} ${Math.round(oy)}H${w}`);
  addPath(svg, 'axis-y', `M${Math.floor(ox)} ${Math.round(oy)}V0`);
}

function drawPersp(svg, w, h) {
  const depth = (x, y) => 1 + cam.wx * x + cam.wy * y;
  const project = (x, y) => {
    const d = depth(x, y);
    const px = w / 2 + cam.ox + (cam.ax * x + cam.bx * y) / d;
    const py = h / 2 + cam.oy + (cam.ay * x + cam.by * y) / d;
    return px.toFixed(1) + ' ' + py.toFixed(1);
  };
  const near = 0.15;
  const lineX = y => {
    const end = Math.min(EXTENT, (near - 1 - cam.wy * y) / cam.wx);
    return end > -EXTENT ? `M${project(-EXTENT, y)}L${project(end, y)}` : '';
  };
  const lineY = x => {
    const start = Math.max(-EXTENT, (near - 1 - cam.wx * x) / cam.wy);
    return start < EXTENT ? `M${project(x, start)}L${project(x, EXTENT)}` : '';
  };

  let minor = '';
  let major = '';
  for (let i = -EXTENT * 10; i <= EXTENT * 10; i++) {
    const d = lineX(i / 10) + lineY(i / 10);
    if (i % 10 === 0) major += d;
    else minor += d;
  }

  addPath(svg, 'minor', minor);
  addPath(svg, 'major', major);
  addPath(svg, 'axis-x', `M${project(0, 0)}L${project(EXTENT, 0)}`);
  addPath(svg, 'axis-y', `M${project(0, 0)}L${project(0, EXTENT)}`);
}

function drawAll() {
  document.querySelectorAll('.viewport').forEach(view => {
    const old = view.querySelector('.grid');
    if (old) old.remove();

    const svg = document.createElementNS(NS, 'svg');
    svg.setAttribute('class', 'grid');
    view.prepend(svg);

    const w = view.clientWidth;
    const h = view.clientHeight;
    if (view.dataset.kind === 'persp') drawPersp(svg, w, h);
    else drawPlan(svg, w, h, view);
  });
}

window.addEventListener('resize', drawAll);
drawAll();
```
